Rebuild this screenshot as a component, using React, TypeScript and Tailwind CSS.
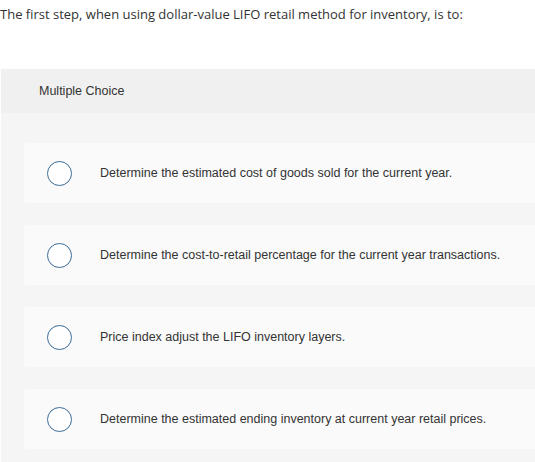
const options = [
  "Determine the estimated cost of goods sold for the current year.",
  "Determine the cost-to-retail percentage for the current year transactions.",
  "Price index adjust the LIFO inventory layers.",
  "Determine the estimated ending inventory at current year retail prices.",
];

export default function App() {
  return (
    <div className="h-[462px] w-[535px] overflow-hidden bg-white font-['Liberation_Sans',Arial,sans-serif] text-[#333]">
      <p className="pt-[5px] font-['Open_Sans',sans-serif] text-[13px] leading-[18px]">
        The first step, when using dollar-value LIFO retail method for inventory, is to:
      </p>

      <div className="ml-px mt-[46px] bg-[#f5f5f5]">
        <div className="flex h-[44px] items-center bg-[#f0f0f0] pl-[38px] text-[12.5px]">
          Multiple Choice
        </div>

        <div className="flex flex-col gap-[22px] pb-[15px] pl-[23px] pt-[30px]">
          {options.map((opt) => (
            <div
              key={opt}
              className="flex h-[60px] items-center rounded-l-[3px] bg-[#fafafa]"
            >
              <span className="ml-[23px] h-[25px] w-[25px] shrink-0 rounded-full border-[1.5px] border-[#3b6a97] bg-white" />
              <span className="ml-[28px] text-[12.5px]">{opt}</span>
            </div>
          ))}
        </div>
      </div>
    </div>
  );
}
